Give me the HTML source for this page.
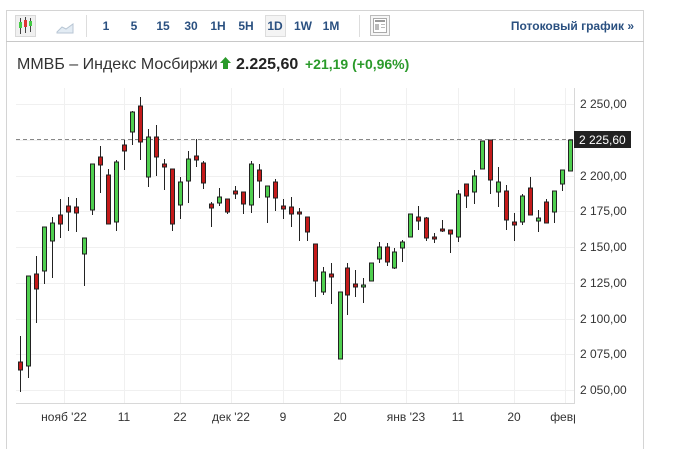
<!DOCTYPE html>
<html><head><meta charset="utf-8"><style>
body{margin:0;width:675px;height:449px;background:#fff;overflow:hidden;font-family:"Liberation Sans",sans-serif}
svg text{font-family:"Liberation Sans",sans-serif}
</style></head><body>
<svg width="675" height="449" viewBox="0 0 675 449" xmlns="http://www.w3.org/2000/svg">
<rect x="6.5" y="10.5" width="637" height="450" fill="#fff" stroke="#d4d4d4"/>
<line x1="6" y1="41.5" x2="644" y2="41.5" stroke="#c8c8c8"/>
<rect x="15.5" y="15.5" width="20" height="21" fill="#f0f0f0" stroke="#d8d8d8"/>
<g stroke="#444" stroke-width="1"><line x1="20.5" y1="18" x2="20.5" y2="34"/><line x1="25.5" y1="17" x2="25.5" y2="33"/><line x1="30.5" y1="18" x2="30.5" y2="32"/></g>
<rect x="19" y="22" width="3" height="6" fill="#4c4"/><rect x="24" y="20" width="3" height="7" fill="#d33"/><rect x="29" y="21" width="3" height="5" fill="#4c4"/>
<path d="M57 32 L62 27 L66 29 L73 24 L73 33 L57 33Z" fill="#e3ecf4" stroke="#b8c6d4"/>
<line x1="86.5" y1="15" x2="86.5" y2="37" stroke="#ddd"/>
<line x1="359.5" y1="15" x2="359.5" y2="37" stroke="#ddd"/>
<rect x="265.5" y="15.5" width="20" height="21" fill="#f4f4f4" stroke="#ddd"/>
<g font-size="12" font-weight="bold" fill="#2a5080" text-anchor="middle">
<text x="106" y="30">1</text><text x="134" y="30">5</text><text x="163" y="30">15</text><text x="191" y="30">30</text><text x="218" y="30">1H</text><text x="246" y="30">5H</text><text x="275" y="30">1D</text><text x="303" y="30">1W</text><text x="331" y="30">1M</text>
</g>
<rect x="370.5" y="15.5" width="19" height="20" fill="#f6f6f6" stroke="#bbb"/>
<rect x="373.5" y="18.5" width="13" height="14" fill="#fff" stroke="#aaa"/>
<rect x="375" y="20" width="10" height="2" fill="#999"/><rect x="375" y="24" width="4" height="6" fill="#bbb"/><rect x="381" y="24" width="4" height="1" fill="#bbb"/><rect x="381" y="27" width="4" height="1" fill="#bbb"/>
<text x="634" y="30" font-size="12" font-weight="bold" fill="#2a5080" text-anchor="end">Потоковый график  »</text>
<text x="17" y="69" font-size="16" fill="#333">ММВБ – Индекс Мосбиржи</text>
<path d="M223 69 L223 63 L220 63 L225.5 57 L231 63 L228 63 L228 69Z" fill="#2a9a2a"/>
<text x="236" y="69" font-size="16" font-weight="bold" fill="#222">2.225,60</text>
<text x="305" y="69" font-size="14" font-weight="bold" fill="#2a9a2a">+21,19  (+0,96%)</text>
<g stroke="#f0f0f0">
<line x1="16" y1="104.5" x2="574" y2="104.5"/><line x1="16" y1="140.5" x2="574" y2="140.5"/><line x1="16" y1="176.5" x2="574" y2="176.5"/><line x1="16" y1="211.5" x2="574" y2="211.5"/><line x1="16" y1="247.5" x2="574" y2="247.5"/><line x1="16" y1="283.5" x2="574" y2="283.5"/><line x1="16" y1="319.5" x2="574" y2="319.5"/><line x1="16" y1="354.5" x2="574" y2="354.5"/><line x1="16" y1="390.5" x2="574" y2="390.5"/>
<line x1="64.5" y1="88" x2="64.5" y2="403"/><line x1="124.5" y1="88" x2="124.5" y2="403"/><line x1="180.5" y1="88" x2="180.5" y2="403"/><line x1="231.5" y1="88" x2="231.5" y2="403"/><line x1="283.5" y1="88" x2="283.5" y2="403"/><line x1="340.5" y1="88" x2="340.5" y2="403"/><line x1="406.5" y1="88" x2="406.5" y2="403"/><line x1="458.5" y1="88" x2="458.5" y2="403"/><line x1="514.5" y1="88" x2="514.5" y2="403"/><line x1="565.5" y1="88" x2="565.5" y2="403"/>
</g>
<line x1="16" y1="403.5" x2="575" y2="403.5" stroke="#d8d8d8"/>
<line x1="574.5" y1="88" x2="574.5" y2="404" stroke="#d8d8d8"/>
<line x1="16" y1="139.5" x2="574" y2="139.5" stroke="#888" stroke-dasharray="4,3"/>
<g font-size="12" fill="#333">
<text x="580" y="108">2 250,00</text><text x="580" y="180">2 200,00</text><text x="580" y="215">2 175,00</text><text x="580" y="251">2 150,00</text><text x="580" y="287">2 125,00</text><text x="580" y="323">2 100,00</text><text x="580" y="358">2 075,00</text><text x="580" y="394">2 050,00</text>
</g>
<rect x="574" y="131" width="57" height="17" fill="#222"/>
<text x="579" y="144" font-size="12" fill="#fff">2 225,60</text>
<g font-size="12" fill="#333" text-anchor="middle">
<text x="64" y="421">нояб '22</text><text x="124" y="421">11</text><text x="180" y="421">22</text><text x="231" y="421">дек '22</text><text x="283" y="421">9</text><text x="340" y="421">20</text><text x="406" y="421">янв '23</text><text x="458" y="421">11</text><text x="514" y="421">20</text>
</g>
<svg x="540" y="405" width="35" height="20"><text x="25" y="16" font-size="12" fill="#333" text-anchor="middle">февр</text></svg>
<g stroke="#222" stroke-width="1">
<line x1="20.5" y1="336" x2="20.5" y2="392"/><rect x="18.5" y="362" width="4" height="8" fill="#c41a1a"/>
<line x1="28.5" y1="276" x2="28.5" y2="378"/><rect x="26.5" y="276" width="4" height="90" fill="#4fcf4f"/>
<line x1="36.5" y1="256" x2="36.5" y2="323"/><rect x="34.5" y="274" width="4" height="15" fill="#c41a1a"/>
<line x1="44.5" y1="227" x2="44.5" y2="284"/><rect x="42.5" y="227" width="4" height="44" fill="#4fcf4f"/>
<line x1="52.5" y1="217" x2="52.5" y2="278"/><rect x="50.5" y="223" width="4" height="18" fill="#4fcf4f"/>
<line x1="60.5" y1="199" x2="60.5" y2="238"/><rect x="58.5" y="215" width="4" height="9" fill="#c41a1a"/>
<line x1="68.5" y1="197" x2="68.5" y2="231"/><rect x="66.5" y="206" width="4" height="6" fill="#c41a1a"/>
<line x1="76.5" y1="198" x2="76.5" y2="232"/><rect x="74.5" y="207" width="4" height="6" fill="#c41a1a"/>
<line x1="84.5" y1="238" x2="84.5" y2="286"/><rect x="82.5" y="238" width="4" height="16" fill="#4fcf4f"/>
<line x1="92.5" y1="164" x2="92.5" y2="215"/><rect x="90.5" y="164" width="4" height="46" fill="#4fcf4f"/>
<line x1="100.5" y1="146" x2="100.5" y2="193"/><rect x="98.5" y="157" width="4" height="8" fill="#c41a1a"/>
<line x1="108.5" y1="169" x2="108.5" y2="224"/><rect x="106.5" y="175" width="4" height="49" fill="#c41a1a"/>
<line x1="116.5" y1="160" x2="116.5" y2="231"/><rect x="114.5" y="162" width="4" height="60" fill="#4fcf4f"/>
<line x1="124.5" y1="140" x2="124.5" y2="170"/><rect x="122.5" y="145" width="4" height="6" fill="#c41a1a"/>
<line x1="132.5" y1="111" x2="132.5" y2="145"/><rect x="130.5" y="112" width="4" height="20" fill="#4fcf4f"/>
<line x1="140.5" y1="97" x2="140.5" y2="160"/><rect x="138.5" y="106" width="4" height="36" fill="#c41a1a"/>
<line x1="148.5" y1="129" x2="148.5" y2="187"/><rect x="146.5" y="137" width="4" height="40" fill="#4fcf4f"/>
<line x1="156.5" y1="125" x2="156.5" y2="176"/><rect x="154.5" y="137" width="4" height="20" fill="#c41a1a"/>
<line x1="164.5" y1="159" x2="164.5" y2="190"/><rect x="162.5" y="164" width="4" height="3" fill="#c41a1a"/>
<line x1="172.5" y1="169" x2="172.5" y2="231"/><rect x="170.5" y="169" width="4" height="55" fill="#c41a1a"/>
<line x1="180.5" y1="177" x2="180.5" y2="219"/><rect x="178.5" y="182" width="4" height="23" fill="#4fcf4f"/>
<line x1="188.5" y1="151" x2="188.5" y2="203"/><rect x="186.5" y="159" width="4" height="22" fill="#4fcf4f"/>
<line x1="196.5" y1="139" x2="196.5" y2="167"/><rect x="194.5" y="156" width="4" height="4" fill="#c41a1a"/>
<line x1="203.5" y1="161" x2="203.5" y2="189"/><rect x="201.5" y="163" width="4" height="20" fill="#c41a1a"/>
<line x1="211.5" y1="202" x2="211.5" y2="227"/><rect x="209.5" y="204" width="4" height="4" fill="#c41a1a"/>
<line x1="219.5" y1="188" x2="219.5" y2="206"/><rect x="217.5" y="197" width="4" height="6" fill="#4fcf4f"/>
<line x1="227.5" y1="199" x2="227.5" y2="214"/><rect x="225.5" y="199" width="4" height="13" fill="#c41a1a"/>
<line x1="235.5" y1="186" x2="235.5" y2="199"/><rect x="233.5" y="191" width="4" height="3" fill="#c41a1a"/>
<line x1="243.5" y1="192" x2="243.5" y2="214"/><rect x="241.5" y="192" width="4" height="12" fill="#c41a1a"/>
<line x1="251.5" y1="161" x2="251.5" y2="213"/><rect x="249.5" y="164" width="4" height="41" fill="#4fcf4f"/>
<line x1="259.5" y1="164" x2="259.5" y2="198"/><rect x="257.5" y="170" width="4" height="11" fill="#c41a1a"/>
<line x1="267.5" y1="186" x2="267.5" y2="223"/><rect x="265.5" y="186" width="4" height="11" fill="#4fcf4f"/>
<line x1="275.5" y1="179" x2="275.5" y2="211"/><rect x="273.5" y="182" width="4" height="16" fill="#c41a1a"/>
<line x1="283.5" y1="199" x2="283.5" y2="219"/><rect x="281.5" y="206" width="4" height="3" fill="#c41a1a"/>
<line x1="291.5" y1="197" x2="291.5" y2="227"/><rect x="289.5" y="207" width="4" height="7" fill="#c41a1a"/>
<line x1="299.5" y1="208" x2="299.5" y2="241"/><rect x="297.5" y="212" width="4" height="2" fill="#c41a1a"/>
<line x1="307.5" y1="217" x2="307.5" y2="241"/><rect x="305.5" y="217" width="4" height="15" fill="#c41a1a"/>
<line x1="315.5" y1="244" x2="315.5" y2="297"/><rect x="313.5" y="244" width="4" height="37" fill="#c41a1a"/>
<line x1="323.5" y1="267" x2="323.5" y2="295"/><rect x="321.5" y="272" width="4" height="20" fill="#4fcf4f"/>
<line x1="331.5" y1="263" x2="331.5" y2="304"/><rect x="329.5" y="274" width="4" height="3" fill="#c41a1a"/>
<line x1="340.5" y1="292" x2="340.5" y2="359"/><rect x="338.5" y="292" width="4" height="67" fill="#4fcf4f"/>
<line x1="347.5" y1="263" x2="347.5" y2="315"/><rect x="345.5" y="268" width="4" height="27" fill="#c41a1a"/>
<line x1="355.5" y1="270" x2="355.5" y2="297"/><rect x="353.5" y="284" width="4" height="3" fill="#c41a1a"/>
<line x1="363.5" y1="278" x2="363.5" y2="303"/><rect x="361.5" y="285" width="4" height="2" fill="#4fcf4f"/>
<line x1="371.5" y1="263" x2="371.5" y2="281"/><rect x="369.5" y="263" width="4" height="18" fill="#4fcf4f"/>
<line x1="379.5" y1="242" x2="379.5" y2="263"/><rect x="377.5" y="247" width="4" height="12" fill="#4fcf4f"/>
<line x1="387.5" y1="243" x2="387.5" y2="266"/><rect x="385.5" y="247" width="4" height="15" fill="#c41a1a"/>
<line x1="394.5" y1="248" x2="394.5" y2="269"/><rect x="392.5" y="252" width="4" height="16" fill="#4fcf4f"/>
<line x1="402.5" y1="240" x2="402.5" y2="262"/><rect x="400.5" y="242" width="4" height="6" fill="#4fcf4f"/>
<line x1="410.5" y1="214" x2="410.5" y2="237"/><rect x="408.5" y="214" width="4" height="23" fill="#4fcf4f"/>
<line x1="418.5" y1="206" x2="418.5" y2="230"/><rect x="416.5" y="217" width="4" height="4" fill="#c41a1a"/>
<line x1="426.5" y1="217" x2="426.5" y2="241"/><rect x="424.5" y="218" width="4" height="20" fill="#c41a1a"/>
<line x1="434.5" y1="233" x2="434.5" y2="243"/><rect x="432.5" y="237" width="4" height="2" fill="#c41a1a"/>
<line x1="442.5" y1="220" x2="442.5" y2="232"/><rect x="440.5" y="229" width="4" height="2" fill="#c41a1a"/>
<line x1="450.5" y1="230" x2="450.5" y2="253"/><rect x="448.5" y="230" width="4" height="4" fill="#c41a1a"/>
<line x1="458.5" y1="190" x2="458.5" y2="242"/><rect x="456.5" y="194" width="4" height="43" fill="#4fcf4f"/>
<line x1="466.5" y1="184" x2="466.5" y2="208"/><rect x="464.5" y="184" width="4" height="12" fill="#c41a1a"/>
<line x1="474.5" y1="170" x2="474.5" y2="204"/><rect x="472.5" y="176" width="4" height="16" fill="#4fcf4f"/>
<line x1="482.5" y1="141" x2="482.5" y2="169"/><rect x="480.5" y="141" width="4" height="28" fill="#4fcf4f"/>
<line x1="490.5" y1="140" x2="490.5" y2="194"/><rect x="488.5" y="140" width="4" height="40" fill="#c41a1a"/>
<line x1="498.5" y1="167" x2="498.5" y2="207"/><rect x="496.5" y="182" width="4" height="10" fill="#4fcf4f"/>
<line x1="506.5" y1="185" x2="506.5" y2="230"/><rect x="504.5" y="191" width="4" height="29" fill="#c41a1a"/>
<line x1="514.5" y1="213" x2="514.5" y2="241"/><rect x="512.5" y="222" width="4" height="3" fill="#c41a1a"/>
<line x1="522.5" y1="194" x2="522.5" y2="225"/><rect x="520.5" y="196" width="4" height="26" fill="#4fcf4f"/>
<line x1="530.5" y1="177" x2="530.5" y2="215"/><rect x="528.5" y="188" width="4" height="27" fill="#c41a1a"/>
<line x1="538.5" y1="210" x2="538.5" y2="232"/><rect x="536.5" y="218" width="4" height="3" fill="#4fcf4f"/>
<line x1="546.5" y1="199" x2="546.5" y2="223"/><rect x="544.5" y="202" width="4" height="21" fill="#c41a1a"/>
<line x1="554.5" y1="191" x2="554.5" y2="223"/><rect x="552.5" y="191" width="4" height="21" fill="#4fcf4f"/>
<line x1="562.5" y1="170" x2="562.5" y2="191"/><rect x="560.5" y="170" width="4" height="14" fill="#4fcf4f"/>
<line x1="570.5" y1="140" x2="570.5" y2="171"/><rect x="568.5" y="140" width="4" height="31" fill="#4fcf4f"/>
</g>
</svg>
</body></html>
